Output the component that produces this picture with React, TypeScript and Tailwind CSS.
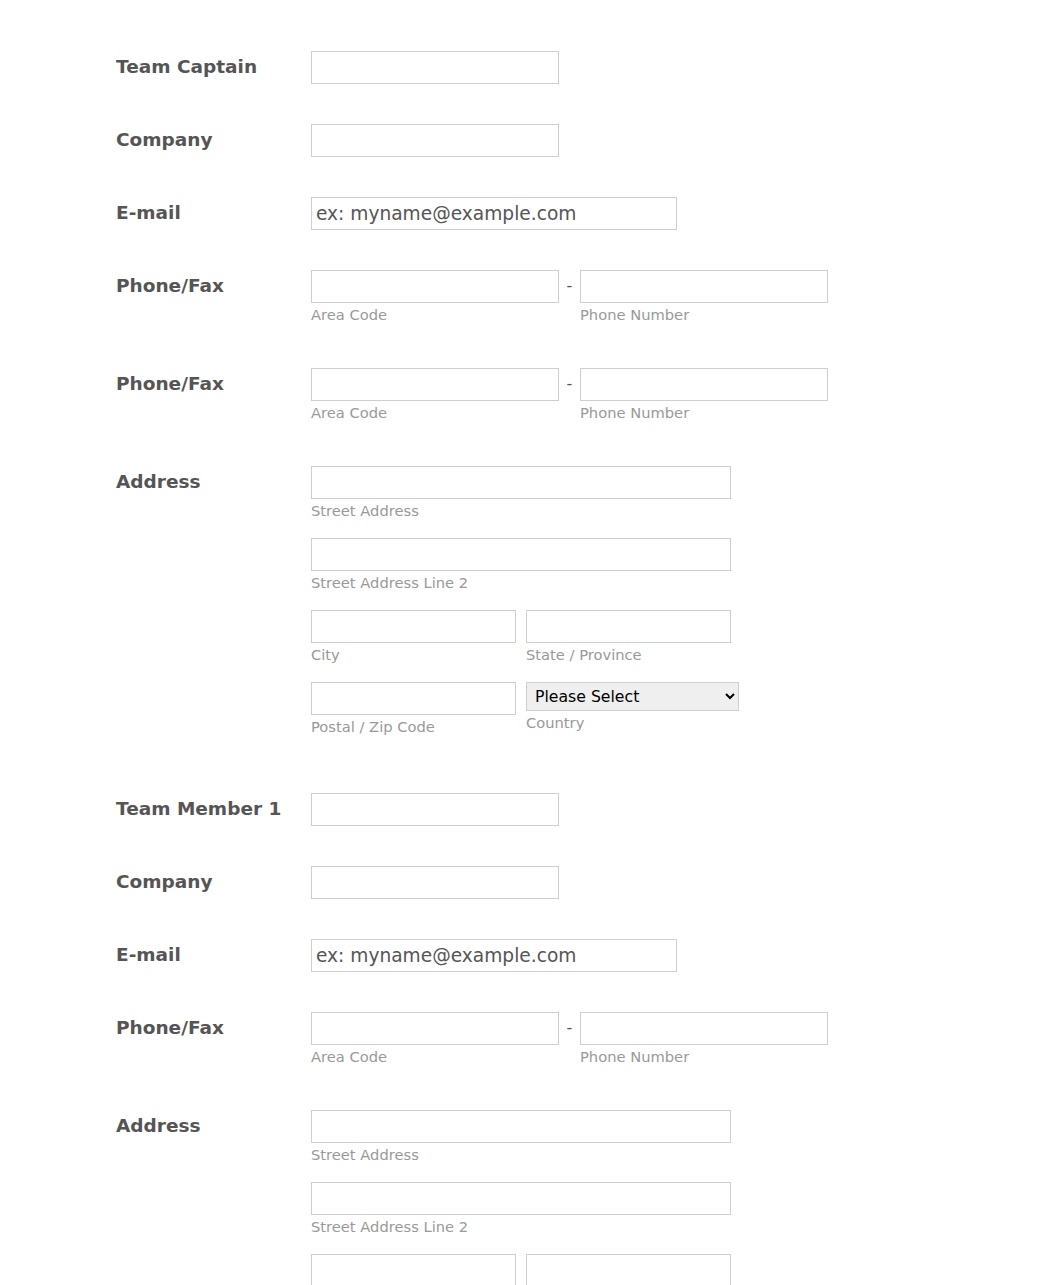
const font = { fontFamily: '"DejaVu Sans", Verdana, sans-serif' };

const Label = ({ text }: { text: string }) => (
  <div className="w-[195px] shrink-0 pt-[4px] text-[18.5px] font-bold leading-[24px] text-[#555]">{text}</div>
);

const Box = ({ w, placeholder }: { w: string; placeholder?: string }) => (
  <input
    type="text"
    placeholder={placeholder}
    className={`${w} h-[33px] border border-[#cfcfcf] bg-white px-[4px] text-[18.6px] text-[#555] outline-none placeholder:text-[#555]`}
  />
);

const Sub = ({ text }: { text: string }) => (
  <div className="mt-[2px] text-[14.7px] leading-[20px] text-[#999]">{text}</div>
);

const Simple = ({ label, w = "w-[248px]", placeholder }: { label: string; w?: string; placeholder?: string }) => (
  <div className="mb-[40px] flex">
    <Label text={label} />
    <Box w={w} placeholder={placeholder} />
  </div>
);

const Phone = () => (
  <div className="mb-[43px] flex">
    <Label text="Phone/Fax" />
    <div className="flex">
      <div>
        <Box w="w-[248px]" />
        <Sub text="Area Code" />
      </div>
      <div className="w-[21px] pt-[4px] text-center text-[16px] leading-[24px] text-[#555]">-</div>
      <div>
        <Box w="w-[248px]" />
        <Sub text="Phone Number" />
      </div>
    </div>
  </div>
);

const Address = ({ last }: { last?: boolean }) => (
  <div className={`flex ${last ? "" : "mb-[56px]"}`}>
    <Label text="Address" />
    <div className="flex flex-col gap-[17px]">
      <div>
        <Box w="w-[420px]" />
        <Sub text="Street Address" />
      </div>
      <div>
        <Box w="w-[420px]" />
        <Sub text="Street Address Line 2" />
      </div>
      <div className="flex gap-[10px]">
        <div>
          <Box w="w-[205px]" />
          {!last && <Sub text="City" />}
        </div>
        <div>
          <Box w="w-[205px]" />
          {!last && <Sub text="State / Province" />}
        </div>
      </div>
      {!last && (
        <div className="flex gap-[10px]">
          <div>
            <Box w="w-[205px]" />
            <Sub text="Postal / Zip Code" />
          </div>
          <div>
            <select className="h-[29px] w-[213px] border border-[#cfcfcf] bg-[#efefef] px-[4px] text-[15.7px] text-black">
              <option>Please Select</option>
            </select>
            <div className="mt-[2px] text-[14.7px] leading-[20px] text-[#999]">Country</div>
          </div>
        </div>
      )}
    </div>
  </div>
);

export default function App() {
  return (
    <div style={font} className="h-[1285px] overflow-hidden bg-white pl-[116px] pt-[51px]">
      <Simple label="Team Captain" />
      <Simple label="Company" />
      <Simple label="E-mail" w="w-[366px]" placeholder="ex: myname@example.com" />
      <Phone />
      <Phone />
      <Address />
      <Simple label="Team Member 1" />
      <Simple label="Company" />
      <Simple label="E-mail" w="w-[366px]" placeholder="ex: myname@example.com" />
      <Phone />
      <Address last />
    </div>
  );
}
